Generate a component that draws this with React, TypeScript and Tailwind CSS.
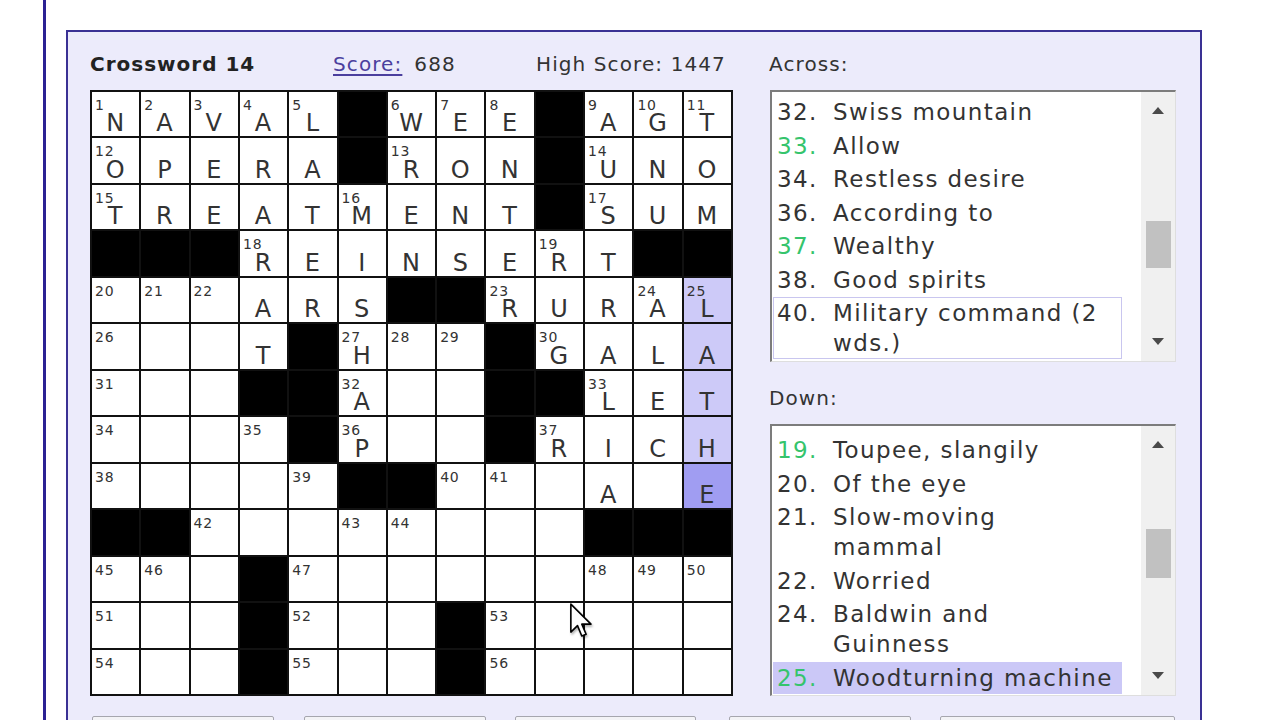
import React from "react";

const SOLUTION = [
  "NAVAL#WEE#AGT",
  "OPERA#RON#UNO",
  "TREATMENT#SUM",
  "###REINSERT##",
  "...ARS##RURAL",
  "...T#H..#GALA",
  "...##A..##LET",
  "....#P..#RICH",
  ".....##...A.E",
  "##........###",
  "...#.........",
  "...#...#.....",
  "...#...#.....",
];

// cells of the current word (25 down); the last one holds the cursor
const WORD = ["4,12", "5,12", "6,12", "7,12"];
const ACTIVE = "8,12";

type Clue = { n: number; lines: string[]; done?: boolean; current?: boolean; selected?: boolean };

const ACROSS: Clue[] = [
  { n: 32, lines: ["Swiss mountain"] },
  { n: 33, lines: ["Allow"], done: true },
  { n: 34, lines: ["Restless desire"] },
  { n: 36, lines: ["According to"] },
  { n: 37, lines: ["Wealthy"], done: true },
  { n: 38, lines: ["Good spirits"] },
  { n: 40, lines: ["Military command (2", "wds.)"], selected: true },
];

const DOWN: Clue[] = [
  { n: 19, lines: ["Toupee, slangily"], done: true },
  { n: 20, lines: ["Of the eye"] },
  { n: 21, lines: ["Slow-moving", "mammal"] },
  { n: 22, lines: ["Worried"] },
  { n: 24, lines: ["Baldwin and", "Guinness"] },
  { n: 25, lines: ["Woodturning machine"], done: true, current: true },
];

function isOpen(r: number, c: number) {
  return r >= 0 && r < 13 && c >= 0 && c < 13 && SOLUTION[r][c] !== "#";
}

function numberGrid() {
  const nums: (number | null)[][] = [];
  let n = 1;
  for (let r = 0; r < 13; r++) {
    const row: (number | null)[] = [];
    for (let c = 0; c < 13; c++) {
      if (!isOpen(r, c)) {
        row.push(null);
        continue;
      }
      const across = !isOpen(r, c - 1) && isOpen(r, c + 1);
      const down = !isOpen(r - 1, c) && isOpen(r + 1, c);
      row.push(across || down ? n++ : null);
    }
    nums.push(row);
  }
  return nums;
}

function Cell({ r, c, num }: { r: number; c: number; num: number | null }) {
  const ch = SOLUTION[r][c];
  if (ch === "#") return <div className="bg-black" />;
  const key = `${r},${c}`;
  const bg = key === ACTIVE ? "bg-[#a09df2]" : WORD.includes(key) ? "bg-[#cdcaf8]" : "bg-white";
  return (
    <div className={`relative ${bg}`}>
      {num !== null && (
        <span className="absolute left-[3px] top-[6px] text-[14px] leading-none tracking-[0.8px] text-[#333]">
          {num}
        </span>
      )}
      <div className="flex h-full items-end justify-center pb-[1px] text-[24px] leading-none tracking-[1px] text-[#333]">
        {ch === "." ? "" : ch}
      </div>
    </div>
  );
}

function Arrow({ down }: { down?: boolean }) {
  return (
    <svg width="12" height="7" viewBox="0 0 12 7" className="shrink-0">
      <polygon points={down ? "0,0 12,0 6,7" : "0,7 12,7 6,0"} fill="#4a4a4a" />
    </svg>
  );
}

function ClueList({
  clues,
  padTop,
  thumbTop,
  thumbH,
  arrowGap,
}: {
  clues: Clue[];
  padTop: string;
  thumbTop: string;
  thumbH: string;
  arrowGap: string;
}) {
  return (
    <div className="ml-[1px] flex w-[406px] overflow-hidden border-t-2 border-l-2 border-r border-b border-t-[#7c7c7c] border-l-[#7c7c7c] border-r-[#dedede] border-b-[#dedede] bg-white">
      <div className={`w-[369px] ${padTop}`}>
        {clues.map((cl) => (
          <div
            key={cl.n}
            className={`ml-[1px] mb-[1.5px] flex w-[349px] border text-[23px] leading-[30px] tracking-[1.4px] text-[#333] ${
              cl.selected ? "border-[#c9c6ef]" : "border-transparent"
            } ${cl.current ? "bg-[#cbc8f7]" : ""}`}
          >
            <span className={`w-[59px] shrink-0 pl-[3px] ${cl.done ? "text-[#35c46c]" : ""}`}>{cl.n}.</span>
            <span className="whitespace-nowrap">
              {cl.lines.map((l, i) => (
                <div key={i}>{l}</div>
              ))}
            </span>
          </div>
        ))}
      </div>
      <div className="flex w-[34px] flex-col items-center bg-[#f0f0f0] pt-[15px]">
        <Arrow />
        <div className={`w-[25px] bg-[#c1c1c1] ${thumbTop} ${thumbH}`} />
        <div className={arrowGap}>
          <Arrow down />
        </div>
      </div>
    </div>
  );
}

export default function App() {
  const nums = numberGrid();
  return (
    <div className="relative h-[720px] w-[1280px] overflow-hidden bg-white font-['DejaVu_Sans',sans-serif] text-[#2b2b2b]">
      <div className="ml-[43px] h-full border-l-[3px] border-[#2b2193] pl-[20px] pt-[30px]">
        <div className="h-[720px] w-[1136px] border-2 border-[#3a3194] bg-[#ecebfb]">
          <div className="flex pl-[22px]">
            <div className="w-[643px]">
              <div className="flex h-[58px] items-center pt-[6px] text-[20px] tracking-[1.1px]">
                <span className="w-[243px] font-bold tracking-[1px] text-[#222]">Crossword 14</span>
                <span className="w-[203px] text-[#333]">
                  <a className="text-[#4b3f9e] underline underline-offset-[3px]">Score:</a>
                  <span className="ml-[12px]">688</span>
                </span>
                <span className="text-[#333]">High Score: 1447</span>
              </div>
              <div className="grid h-[606px] w-[643px] grid-cols-[repeat(13,minmax(0,1fr))] grid-rows-[repeat(13,minmax(0,1fr))] gap-[2px] bg-[#111] p-[2px]">
                {SOLUTION.map((row, r) =>
                  row.split("").map((_, c) => <Cell key={`${r}-${c}`} r={r} c={c} num={nums[r][c]} />)
                )}
              </div>
            </div>
            <div className="ml-[36px] w-[407px]">
              <div className="flex h-[58px] items-center pt-[6px] text-[20px] tracking-[1.1px] text-[#333]">Across:</div>
              <div className="h-[270px]">
                <ClueList clues={ACROSS} padTop="pt-[4px]" thumbTop="mt-[107px]" thumbH="h-[47px]" arrowGap="mt-[70px]" />
              </div>
              <div className="flex h-[64px] items-center pt-[12px] text-[20px] tracking-[1.1px] text-[#333]">Down:</div>
              <div className="h-[269px]">
                <ClueList clues={DOWN} padTop="pt-[8px]" thumbTop="mt-[81px]" thumbH="h-[49px]" arrowGap="mt-[94px]" />
              </div>
            </div>
          </div>
          <div className="mt-[20px] flex pl-[24px]">
            <div className="h-[30px] w-[182px] rounded-[2px] border border-[#a6a6ae] bg-[#f3f3f6]" />
            <div className="ml-[30px] h-[30px] w-[182px] rounded-[2px] border border-[#a6a6ae] bg-[#f3f3f6]" />
            <div className="ml-[29px] h-[30px] w-[181px] rounded-[2px] border border-[#a6a6ae] bg-[#f3f3f6]" />
            <div className="ml-[33px] h-[30px] w-[182px] rounded-[2px] border border-[#a6a6ae] bg-[#f3f3f6]" />
            <div className="ml-[29px] h-[30px] w-[235px] rounded-[2px] border border-[#a6a6ae] bg-[#f3f3f6]" />
          </div>
        </div>
      </div>
      <svg
        className="absolute left-[569px] top-[603px] drop-shadow-[1px_2px_1px_rgba(0,0,0,0.3)]"
        width="24"
        height="35"
        viewBox="0 0 12.5 19.5"
      >
        <path
          d="M0.6 0.6 V16.2 L4.3 12.6 L6.7 18.4 L9.1 17.4 L6.7 11.8 H11.8 Z"
          fill="#fff"
          stroke="#000"
          strokeWidth="0.9"
          strokeLinejoin="round"
        />
      </svg>
    </div>
  );
}
